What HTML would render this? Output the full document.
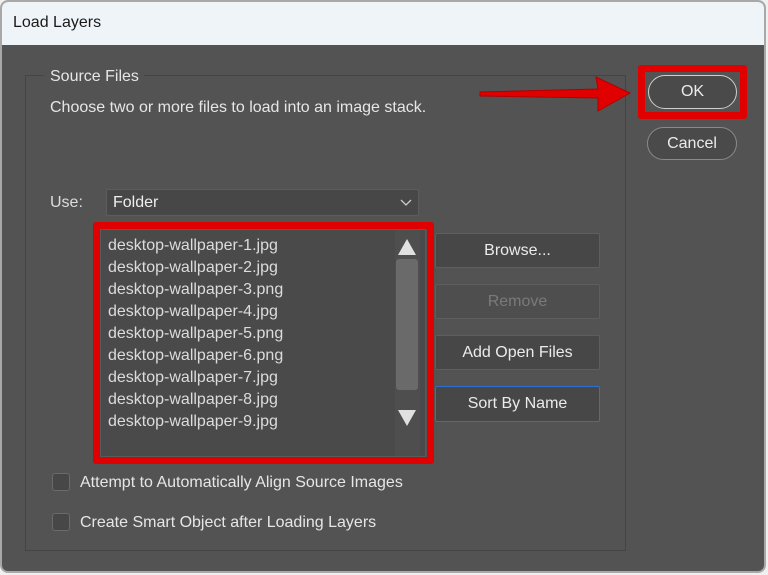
<!DOCTYPE html>
<html><head><style>
*{margin:0;padding:0;box-sizing:border-box}
body{width:768px;height:575px;background:#f0f0f0;font-family:"Liberation Sans",sans-serif;position:relative;overflow:hidden}
.win{position:absolute;left:0;top:0;width:766px;height:573px;border:2px solid #a8a8a8;border-radius:8px;background:#535353;overflow:hidden}
.title{position:absolute;left:0;top:0;width:100%;height:43px;background:#eef4f8;color:#1a1a1a;font-size:16px;padding:12px 0 0 11px}
.a{position:absolute}
.t{color:#e6e6e6;font-size:16px;position:absolute;white-space:nowrap}
.btn{position:absolute;background:#474747;border:1px solid #5e5e5e;color:#ebebeb;font-size:16px;text-align:center;line-height:33px;border-radius:2px}
.cb{position:absolute;width:18px;height:18px;border:1px solid #6a6a6a;background:#474747;border-radius:3px}
</style></head><body>
<div class="win">
<div class="title">Load Layers</div>
</div>
<div class="a" style="left:25px;top:75px;width:601px;height:476px;border:1px solid #444"></div>
<div class="a" style="left:44px;top:66px;width:100px;height:20px;background:#535353"></div>
<div class="t" style="left:50px;top:68px">Source Files</div>
<div class="t" style="left:50px;top:99px">Choose two or more files to load into an image stack.</div>
<div class="t" style="left:50px;top:194px;color:#ddd">Use:</div>
<div class="a" style="left:106px;top:189px;width:313px;height:27px;background:#474747;border:1px solid #5d5d5d;border-radius:2px"></div>
<div class="t" style="left:113px;top:194px;color:#eee">Folder</div>
<svg class="a" style="left:400px;top:199px" width="12" height="8"><path d="M1 1 L6 6 L11 1" stroke="#ccc" fill="none" stroke-width="1.3"/></svg>
<div class="a" style="left:100px;top:229px;width:326px;height:228px;background:#4a4a4a;border:1px solid #5a5a5a"></div>
<div class="a" style="left:395px;top:230px;width:25px;height:226px;background:#4e4e4e"></div>
<div class="a" style="left:396px;top:259px;width:22px;height:131px;background:#6a6a6a;border-radius:3px"></div>
<svg class="a" style="left:397px;top:238px" width="20" height="18"><path d="M10 1 L19 17 L1 17Z" fill="#e0e0e0"/></svg>
<svg class="a" style="left:397px;top:409px" width="20" height="18"><path d="M1 1 L19 1 L10 17Z" fill="#e0e0e0"/></svg>
<div class="t" style="left:108px;top:235px;color:#dcdcdc;line-height:22px">desktop-wallpaper-1.jpg<br>desktop-wallpaper-2.jpg<br>desktop-wallpaper-3.png<br>desktop-wallpaper-4.jpg<br>desktop-wallpaper-5.png<br>desktop-wallpaper-6.png<br>desktop-wallpaper-7.jpg<br>desktop-wallpaper-8.jpg<br>desktop-wallpaper-9.jpg</div>
<div class="a" style="left:93px;top:222px;width:341px;height:242px;border:7px solid #e00000;border-radius:3px"></div>
<div class="btn" style="left:435px;top:233px;width:165px;height:35px">Browse...</div>
<div class="btn" style="left:435px;top:284px;width:165px;height:35px;color:#7a7a7a;background:#4e4e4e">Remove</div>
<div class="btn" style="left:435px;top:335px;width:165px;height:35px">Add Open Files</div>
<div class="btn" style="left:435px;top:386px;width:165px;height:36px;border:1px solid #2f6fd0">Sort By Name</div>
<div class="cb" style="left:52px;top:473px"></div>
<div class="t" style="left:80px;top:474px">Attempt to Automatically Align Source Images</div>
<div class="cb" style="left:52px;top:513px"></div>
<div class="t" style="left:80px;top:514px">Create Smart Object after Loading Layers</div>
<div class="btn" style="left:648px;top:75px;width:89px;height:34px;border:1.5px solid #cfcfcf;border-radius:17px;background:#4a4a4a;line-height:31px">OK</div>
<div class="a" style="left:638px;top:65px;width:109px;height:54px;border:7px solid #e00000;border-radius:3px"></div>
<div class="btn" style="left:647px;top:127px;width:90px;height:33px;border:1px solid #8a8a8a;border-radius:17px;background:#4a4a4a;line-height:31px">Cancel</div>
<svg class="a" style="left:478px;top:72px" width="156" height="44"><path d="M2 20 L120 17 L118 5 L152 21 L120 39 L120 26 L2 24Z" fill="#e00000" stroke="#b00000" stroke-width="1"/></svg>
</body></html>
